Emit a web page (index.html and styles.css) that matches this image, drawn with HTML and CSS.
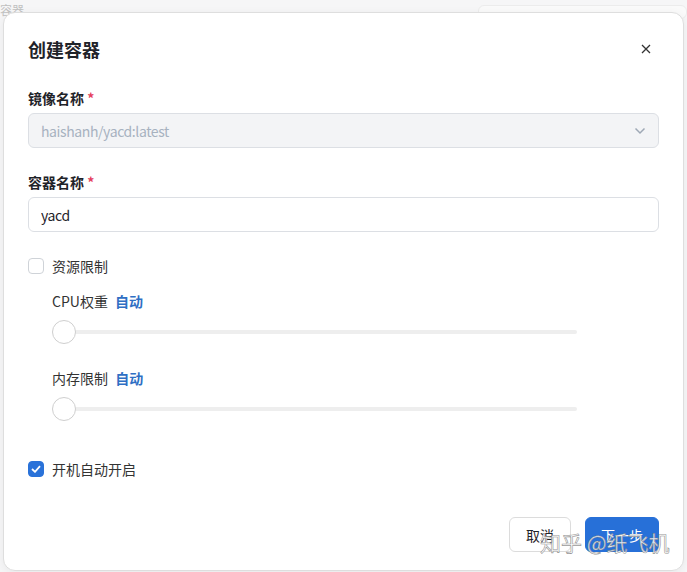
FILE: index.html
```html
<!DOCTYPE html>
<html lang="zh-CN">
<head>
    <meta charset="UTF-8">
    <meta name="viewport" content="width=device-width, initial-scale=1.0">
    <title>创建容器</title>
    <link rel="stylesheet" href="styles.css">
</head>
<body>

    <div class="page">
        <span class="crumb">容器</span>
        <div class="toolbar"></div>
    </div>

    <div class="modal">
        <div class="modal-header">
            <h1>创建容器</h1>
            <button class="close" aria-label="关闭">
                <svg width="10" height="10" viewBox="0 0 10 10">
                    <path d="M1 1L9 9M9 1L1 9" stroke="#333" stroke-width="1.3" fill="none"/>
                </svg>
            </button>
        </div>

        <div class="field">
            <label>镜像名称 <span class="req">*</span></label>
            <div class="select">
                <span>haishanh/yacd:latest</span>
                <svg width="12" height="8" viewBox="0 0 12 8">
                    <path d="M1.5 1.5L6 6L10.5 1.5" stroke="#9ea8b5" stroke-width="1.5" fill="none"/>
                </svg>
            </div>
        </div>

        <div class="field">
            <label>容器名称 <span class="req">*</span></label>
            <input class="input" type="text" value="yacd">
        </div>

        <div class="check-row">
            <span class="box"></span>
            <span>资源限制</span>
        </div>

        <div class="limits">
            <div class="limit-label">CPU权重 <span class="auto">自动</span></div>
            <div class="slider"><span class="thumb"></span></div>

            <div class="limit-label">内存限制 <span class="auto">自动</span></div>
            <div class="slider"><span class="thumb"></span></div>
        </div>

        <div class="check-row autostart">
            <span class="box checked">
                <svg width="10" height="8" viewBox="0 0 10 8">
                    <path d="M1 4L4 6.8L9 1.2" stroke="#fff" stroke-width="1.8" fill="none"/>
                </svg>
            </span>
            <span>开机自动开启</span>
        </div>

        <div class="modal-footer">
            <button class="btn">取消</button>
            <button class="btn primary">下一步</button>
        </div>

        <div class="watermark">知乎 @纸飞机</div>
    </div>

</body>
</html>
```

FILE: styles.css
```css
* {
    box-sizing: border-box;
}
body {
    margin: 0;
    font-family: "Noto Sans CJK SC", "Noto Sans", sans-serif;
    font-size: 14px;
    color: #1f2329;
    background: #f6f6f7;
    width: 687px;
    height: 572px;
    overflow: hidden;
    position: relative;
}
.page {
    display: flex;
    justify-content: space-between;
    padding: 2px 0 0 0;
}
.crumb {
    color: #c0c0c0;
    font-size: 12px;
    line-height: 16px;
}
.toolbar {
    width: 209px;
    height: 14px;
    margin-top: 3px;
    border: 1px solid #ececec;
    border-radius: 6px;
    background: #fafafa;
}
.modal {
    position: absolute;
    left: 3px;
    top: 12px;
    width: 681px;
    height: 559px;
    background: #fff;
    border: 1px solid #dedede;
    border-radius: 12px;
    box-shadow: 0 2px 10px rgba(0, 0, 0, 0.06);
    padding: 23px 24px 0 24px;
}
.modal-header {
    display: flex;
    justify-content: space-between;
    align-items: center;
    margin-bottom: 26px;
}
.modal-header h1 {
    margin: 0;
    font-size: 18px;
    line-height: 26px;
    font-weight: 700;
}
.close {
    width: 26px;
    height: 26px;
    border: none;
    background: none;
    padding: 0;
    display: flex;
    align-items: center;
    justify-content: center;
}
.field {
    margin-bottom: 24px;
}
.field label {
    display: block;
    font-weight: 700;
    line-height: 20px;
    margin-bottom: 5px;
}
.req {
    color: #e5405e;
}
.select, .input {
    width: 100%;
    height: 35px;
    border: 1px solid #dcdfe4;
    border-radius: 6px;
    padding: 0 12px;
    font-family: inherit;
    font-size: 14px;
    letter-spacing: -0.4px;
}
.select {
    display: flex;
    align-items: center;
    justify-content: space-between;
    background: #f3f4f6;
    color: #a7b2c0;
}
.input {
    color: #1f2329;
    outline: none;
}
.check-row {
    display: flex;
    align-items: center;
    gap: 8px;
    line-height: 20px;
    color: #333;
}
.box {
    width: 16px;
    height: 16px;
    border: 1px solid #cfd3d8;
    border-radius: 4px;
    display: flex;
    align-items: center;
    justify-content: center;
}
.box.checked {
    background: #2a72d9;
    border-color: #2a72d9;
}
.limits {
    padding: 15px 0 0 24px;
}
.limit-label {
    line-height: 20px;
    color: #333;
    margin-bottom: 9px;
}
.auto {
    color: #2f6fc4;
    font-weight: 700;
    margin-left: 4px;
}
.slider {
    width: 525px;
    height: 24px;
    position: relative;
    display: flex;
    align-items: center;
    margin-bottom: 24px;
}
.slider::before {
    content: "";
    width: 100%;
    height: 4px;
    border-radius: 2px;
    background: #eeeeee;
}
.thumb {
    position: absolute;
    left: 0;
    top: 0;
    width: 24px;
    height: 24px;
    border-radius: 50%;
    background: #fff;
    border: 1px solid #cfcfcf;
}
.autostart {
    margin-top: 38px;
}
.modal-footer {
    display: flex;
    justify-content: flex-end;
    gap: 14px;
    margin-top: 38px;
}
.btn {
    height: 35px;
    padding: 0 16px;
    border: 1px solid #dcdcdc;
    border-radius: 6px;
    background: #fff;
    color: #1f2329;
    font-family: inherit;
    font-size: 14px;
}
.btn.primary {
    padding: 0 15px;
    background: #2770d8;
    border-color: #2770d8;
    color: #fff;
}
.watermark {
    position: absolute;
    left: 536px;
    top: 514px;
    font-size: 21px;
    color: rgba(255, 255, 255, 0.85);
    -webkit-text-stroke: 0.6px rgba(120, 120, 120, 0.8);
    white-space: nowrap;
    pointer-events: none;
}
```
